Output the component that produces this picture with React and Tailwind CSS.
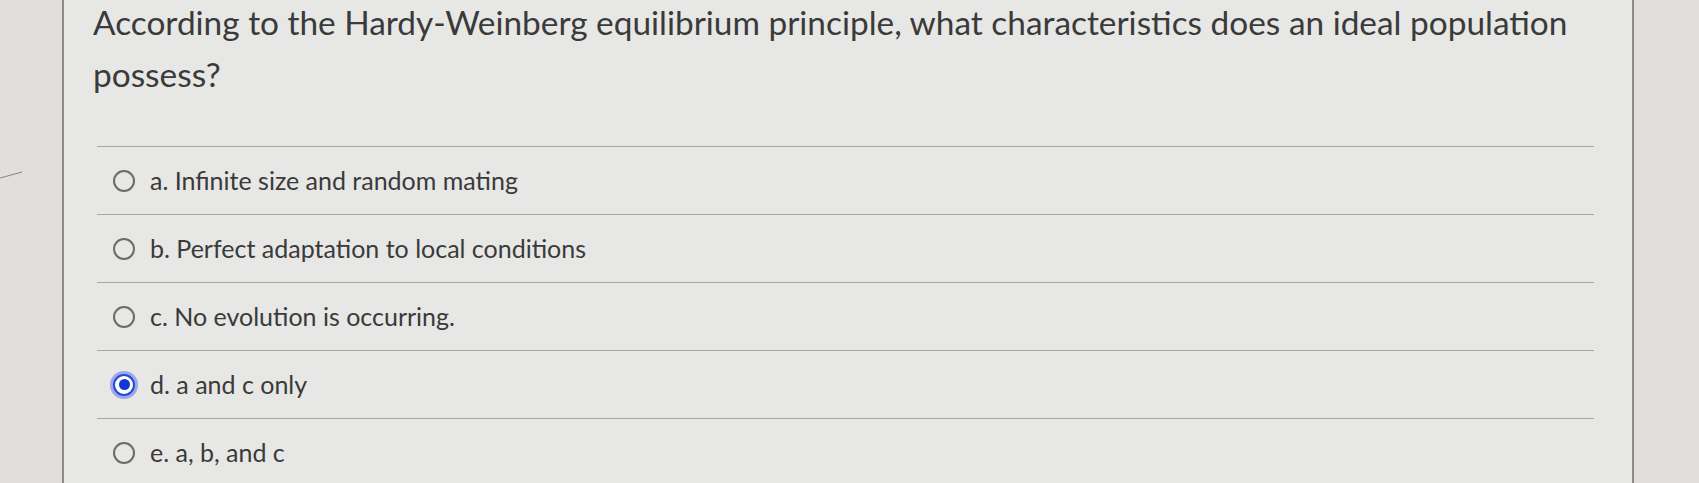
import React from "react";

const options = [
  { key: "a", text: "a. Infinite size and random mating" },
  { key: "b", text: "b. Perfect adaptation to local conditions" },
  { key: "c", text: "c. No evolution is occurring." },
  { key: "d", text: "d. a and c only", selected: true },
  { key: "e", text: "e. a, b, and c" },
];

const Radio = ({ selected }) =>
  selected ? (
    <span className="flex h-[22px] w-[22px] shrink-0 items-center justify-center rounded-full border-2 border-[#2747d6] bg-white ring-[3px] ring-[#9aa8ee]">
      <span className="h-[11px] w-[11px] rounded-full bg-[#1236d8]"></span>
    </span>
  ) : (
    <span className="h-[22px] w-[22px] shrink-0 rounded-full border-2 border-[#6a6a6a]"></span>
  );

const App = () => {
  return (
    <div
      className="relative flex h-[483px] w-full overflow-hidden bg-[#e0dfdc] text-[#3a3a3a]"
      style={{ fontFamily: "Lato, 'Open Sans', sans-serif" }}
    >
      <svg className="absolute left-0 top-[170px]" width="24" height="10" viewBox="0 0 24 10">
        <line x1="0" y1="8" x2="22" y2="2" stroke="#8a8a8a" strokeWidth="1.2" />
      </svg>

      <div className="ml-[62px] mr-[65px] flex flex-1 flex-col border-x-2 border-[#8c8c8c] bg-[#e7e7e5]">
        <h1 className="-mt-[4px] pl-[29px] pr-6 text-[33.4px] font-normal leading-[52px]">
          According to the Hardy-Weinberg equilibrium principle, what characteristics does an ideal population possess?
        </h1>

        <div className="ml-[33px] mr-[38px] mt-[46px] border-t border-[#a8a8a6]">
          {options.map((o) => (
            <div
              key={o.key}
              className="flex h-[68px] items-center gap-[15px] border-b border-[#a8a8a6] pl-[16px]"
            >
              <Radio selected={o.selected} />
              <span className="text-[25px] leading-none">{o.text}</span>
            </div>
          ))}
        </div>
      </div>
    </div>
  );
};

export default App;
